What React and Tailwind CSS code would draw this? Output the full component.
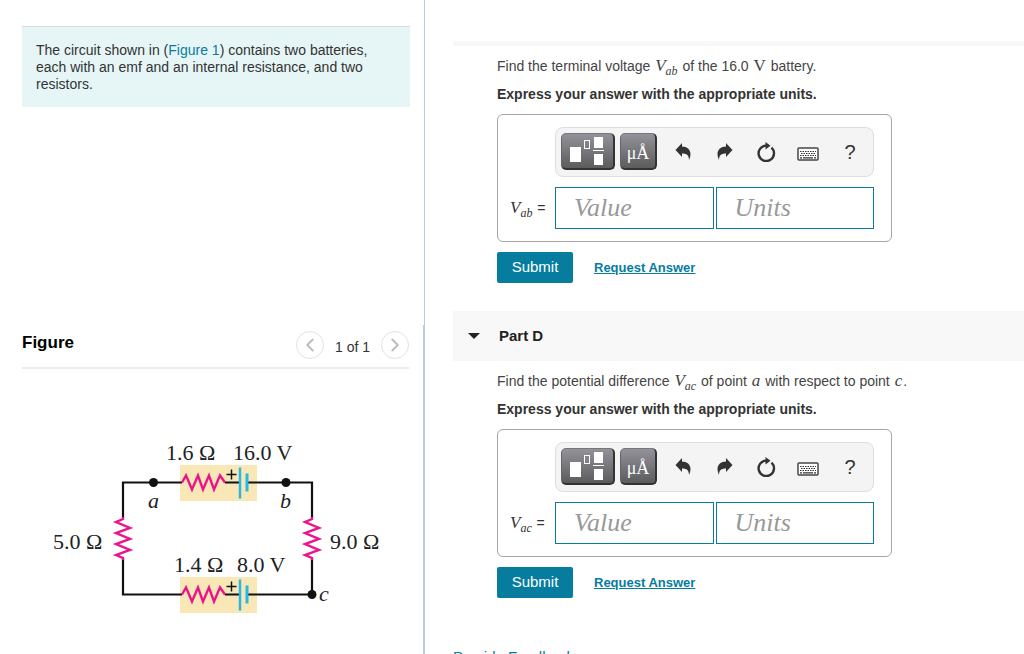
import { useState } from "react";
import { ChevronLeft, ChevronRight } from "lucide-react";

const Variable = ({ name, sub }) => (
  <span className="px-px font-['Liberation_Serif',serif] text-[17px] leading-none italic">
    {name}
    {sub && <sub className="bottom-0 top-1 text-xs leading-none">{sub}</sub>}
  </span>
);

const TemplateIcon = () => (
  <svg width="36" height="28" viewBox="0 0 36 28" aria-hidden="true">
    <rect x="0" y="10" width="11" height="15" fill="#fff" />
    <rect x="14.5" y="3.500" width="5" height="8" fill="none" stroke="#fff" />
    <rect x="24" y="0" width="9" height="11" fill="#fff" />
    <rect x="23" y="13" width="11" height="1" fill="#fff" />
    <rect x="24" y="17" width="9" height="11" fill="#fff" />
  </svg>
);

const UndoIcon = () => (
  <svg width="16" height="17" viewBox="0 0 16 17" aria-hidden="true">
    <path d="M7 0v3.500C12 3.500 15.500 6.500 15.500 11c0 2-.5 4-1.500 6 0-4.500-2-6.500-7-6.500V14L.5 7z" fill="#333" />
  </svg>
);

const RedoIcon = () => (
  <svg width="16" height="17" viewBox="0 0 16 17" aria-hidden="true">
    <path d="M9 0v3.500C4 3.500.5 6.500.5 11c0 2 .5 4 1.500 6 0-4.500 2-6.500 7-6.500V14l6.500-7z" fill="#333" />
  </svg>
);

const ResetIcon = () => (
  <svg width="20" height="20" viewBox="0 0 20 20" aria-hidden="true">
    <path d="M15.500 5.600A7.700 7.700 0 1 1 10 3.600" fill="none" stroke="#333" strokeWidth="2.400" />
    <path d="M9.500 0l5 3.800-5 3.800z" fill="#333" />
  </svg>
);

const KeyboardIcon = () => (
  <svg width="22" height="14" viewBox="0 0 22 14" aria-hidden="true">
    <rect x="1" y="1" width="20" height="12" rx="1" fill="#fff" stroke="#444" strokeWidth="1.500" />
    <path d="M3 4.500h16M4 6.500h15M3 8.500h16" stroke="#333" strokeWidth="1.200" strokeDasharray="1.500 1" />
    <path d="M3 10.800h2M6 10.800h10M17 10.800h2" stroke="#333" strokeWidth="1.300" />
  </svg>
);

const AnswerBox = ({ id, sub }) => {
  const [value, setValue] = useState("");
  const [units, setUnits] = useState("");

  const darkButton =
    "flex h-[37px] items-center justify-center rounded-[5px] border border-t-[#777] border-l-[#666] border-r-2 border-b-2 border-r-[#333] border-b-[#333] bg-linear-to-b from-[#93929a] to-[#5c5c5e] text-white";
  const toolButton = "flex h-[37px] flex-1 items-center justify-center text-xl text-[#333]";
  const inputStyle =
    "h-[42px] min-w-0 flex-1 border border-[#0a7c9d] bg-white px-[18px] font-['Liberation_Serif',serif] text-[26px] italic text-[#333] placeholder:text-[#999] focus:outline-none";

  return (
    <div className="mt-[11px] max-w-[395px] rounded-md border border-[#a6a6a6] px-[17px] pt-3 pb-3">
      {/* Toolbar */}
      <div className="ml-10 flex h-[50px] items-start rounded-lg border border-[#dedede] bg-[#f4f4f4] pt-[5px] pr-[2px] pl-[5px]">
        <button type="button" aria-label="Templates" className={`${darkButton} w-[54px]`}>
          <TemplateIcon />
        </button>
        <button
          type="button"
          className={`${darkButton} ml-[5px] w-[37px] pt-1 font-['Liberation_Serif',serif] text-lg`}
        >
          μÅ
        </button>
        <div className="ml-[5px] flex flex-1">
          <button type="button" aria-label="Undo" className={toolButton}><UndoIcon /></button>
          <button type="button" aria-label="Redo" className={toolButton}><RedoIcon /></button>
          <button type="button" aria-label="Reset" className={toolButton}><ResetIcon /></button>
          <button type="button" aria-label="Keyboard" className={`${toolButton} pt-[5px]`}>
            <KeyboardIcon />
          </button>
          <button type="button" className={toolButton}>?</button>
        </div>
      </div>

      {/* Value and units */}
      <div className="mt-[10px] flex items-center gap-[2px]">
        <label htmlFor={`${id}-value`} className="-ml-[6px] w-[44px] whitespace-nowrap text-sm">
          <Variable name="V" sub={sub} /> =
        </label>
        <input
          id={`${id}-value`}
          type="text"
          placeholder="Value"
          value={value}
          onChange={(e) => setValue(e.target.value)}
          className={inputStyle}
        />
        <input
          type="text"
          aria-label="Units"
          placeholder="Units"
          value={units}
          onChange={(e) => setUnits(e.target.value)}
          className={inputStyle}
        />
      </div>
    </div>
  );
};

const Part = ({ id, sub, children }) => (
  <form onSubmit={(e) => e.preventDefault()} className="px-11 pt-[11px] pb-7">
    <p className="h-[18px] text-sm leading-[18px] text-[#444]">{children}</p>
    <p className="mt-[10px] text-sm leading-[18px] font-bold text-[#333]">
      Express your answer with the appropriate units.
    </p>
    <AnswerBox id={id} sub={sub} />
    <div className="mt-[10px] flex items-center gap-[21px]">
      <button type="submit" className="h-[31px] w-[76px] rounded-xs bg-[#067c9f] text-[15px] text-white">
        Submit
      </button>
      <a href="#answer" className="text-[13px] font-bold text-[#067c9f] underline">
        Request Answer
      </a>
    </div>
  </form>
);

const zigzag = "l4-7 6 14 6-14 5 14 6-14 5 14 6-14 5 7";

const Battery = ({ y }) => (
  <g>
    <rect x="180" y={y - 17.5} width="77" height="36" fill="#f9e7b6" />
    <path d={`M180 ${y}h2M225 ${y}h15M248 ${y}h9`} stroke="#111" strokeWidth="2.200" />
    <path d={`M182 ${y}${zigzag}`} fill="none" stroke="#ec148c" strokeWidth="2.400" />
    <path d={`M226.500 ${y - 8}h10m-5-5v10`} stroke="#111" strokeWidth="1.500" />
    <path d={`M240 ${y - 15}v31`} stroke="#27b7e8" strokeWidth="2.500" />
    <path d={`M247 ${y - 9}v18`} stroke="#27b7e8" strokeWidth="3" />
  </g>
);

const Circuit = () => (
  <svg
    viewBox="22 430 388 190"
    className="mt-[61px] h-[190px] w-[388px] font-['Liberation_Serif',serif] text-[22px]"
    role="img"
    aria-label="Circuit with two batteries and two resistors"
  >
    <path
      d="M181 482.500H123V518M123 559V594.500H181M256 482.500H312V518M312 559V594.500H256"
      fill="none"
      stroke="#111"
      strokeWidth="2.200"
    />
    <Battery y={482.5} />
    <Battery y={594.5} />
    <path
      d="M123 517v2l-7 3 14 6-14 5 14 6-14 5 14 6-14 5 7 3v2M312 517v2l-7 3 14 6-14 5 14 6-14 5 14 6-14 5 7 3v2"
      fill="none"
      stroke="#ec148c"
      strokeWidth="2.400"
    />
    <circle cx="153.500" cy="482.500" r="4.500" fill="#111" />
    <circle cx="286" cy="482.500" r="4.500" fill="#111" />
    <circle cx="312" cy="594.500" r="4.500" fill="#111" />
    <g fill="#222">
      <text x="166" y="460">1.6 Ω</text>
      <text x="233" y="460">16.0 V</text>
      <text x="174" y="572">1.4 Ω</text>
      <text x="237" y="572">8.0 V</text>
      <text x="53" y="549">5.0 Ω</text>
      <text x="330" y="549">9.0 Ω</text>
      <g fontStyle="italic">
        <text x="148" y="508">a</text>
        <text x="280" y="508">b</text>
        <text x="319" y="601">c</text>
      </g>
    </g>
  </svg>
);

const App = () => {
  const [open, setOpen] = useState(true);
  const arrowStyle =
    "flex size-7 items-center justify-center rounded-full border border-[#e2e2e2] text-[#bbb]";

  return (
    <div className="flex h-screen overflow-hidden bg-white font-['Liberation_Sans',Arial,sans-serif] text-[#333]">
      {/* Problem statement and figure */}
      <aside className="flex w-[425px] shrink-0 flex-col">
        <div className="flex-1 border-r border-[#b9cddf] pt-[26px] pr-[14px] pl-[22px]">
          <p className="border-t border-[#d9dcdc] bg-[#e6f6f7] px-[14px] pt-[15px] pb-[14px] text-sm leading-[17px]">
            The circuit shown in (<a href="#figure" className="text-[#067c9f]">Figure 1</a>) contains two
            batteries, each with an emf and an internal resistance, and two resistors.
          </p>
        </div>

        <div id="figure" className="border-r-2 border-[#b9cddf] pt-[6px] pr-[14px] pb-[34px] pl-[22px]">
          <div className="flex items-center border-b-2 border-[#ebebeb] pb-2">
            <h2 className="flex-1 pb-1 text-[17px] leading-6 font-bold text-black">Figure</h2>
            <button type="button" aria-label="Previous figure" className={arrowStyle}>
              <ChevronLeft size={22} />
            </button>
            <span className="px-[11px] pt-[3px] text-sm">1 of 1</span>
            <button type="button" aria-label="Next figure" className={arrowStyle}>
              <ChevronRight size={22} />
            </button>
          </div>
          <Circuit />
        </div>
      </aside>

      {/* Parts */}
      <main className="min-w-0 flex-1 overflow-hidden pt-[41px] pl-7">
        <div className="h-[5px] bg-[#f8f8f8]" />
        <Part id="part-c" sub="ab">
          Find the terminal voltage <Variable name="V" sub="ab" /> of the 16.0{" "}
          <span className="px-px font-['Liberation_Serif',serif] text-[17px] leading-none">V</span> battery.
        </Part>

        <button
          type="button"
          aria-expanded={open}
          onClick={() => setOpen(!open)}
          className="flex h-[50px] w-full items-center gap-[19px] bg-[#f8f8f8] pl-[15px] text-[15px] font-bold text-[#222]"
        >
          <svg width="12" height="6" viewBox="0 0 12 6" aria-hidden="true">
            <path d="M0 0h12L6 6z" fill="#222" />
          </svg>
          Part D
        </button>
        {open && (
          <Part id="part-d" sub="ac">
            Find the potential difference <Variable name="V" sub="ac" /> of point <Variable name="a" /> with
            respect to point <Variable name="c" />.
          </Part>
        )}

        <a href="#feedback" className="mt-5 block text-[15px] text-[#067c9f]">
          Provide Feedback
        </a>
      </main>
    </div>
  );
};

export default App;
